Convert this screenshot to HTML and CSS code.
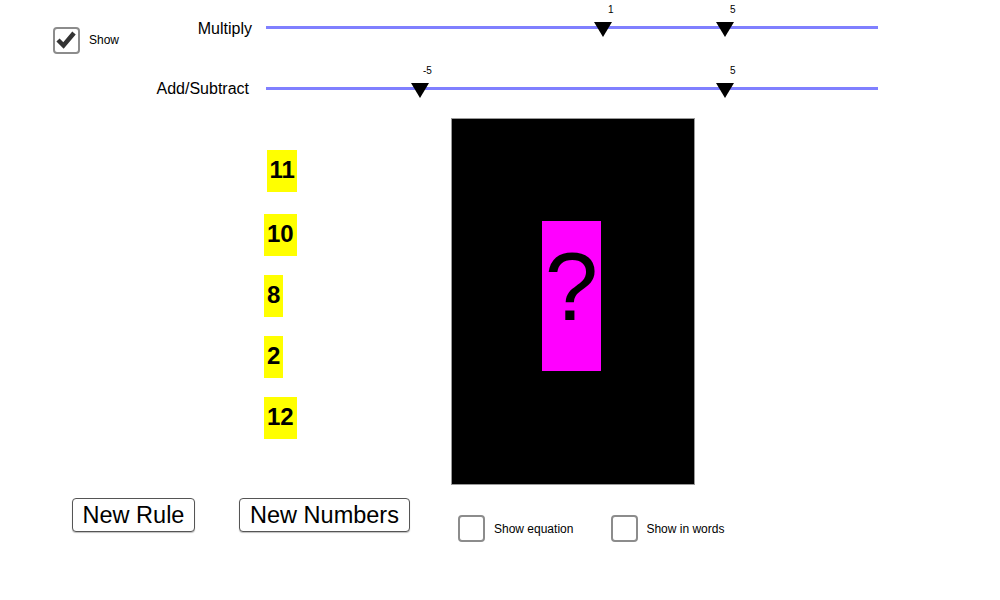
FILE: index.html
```html
<!DOCTYPE html>
<html>
<head>
<meta charset="utf-8">
<link rel="stylesheet" href="styles.css">
</head>
<body>
<div class="applet">
  <div class="check check-show">
    <span class="box">
      <svg class="tick" width="27" height="27" viewBox="0 0 27 27"><path d="M5 13 L10.5 18.5 L21 6" fill="none" stroke="#333" stroke-width="4.5" stroke-linejoin="miter"/></svg>
    </span>
    <span class="check-label">Show</span>
  </div>

  <div class="slider slider-mult">
    <span class="slider-name">Multiply</span>
    <div class="track">
      <div class="thumb" style="left:337px"><span class="thumb-val">1</span></div>
      <div class="thumb" style="left:459px"><span class="thumb-val">5</span></div>
    </div>
  </div>

  <div class="slider slider-add">
    <span class="slider-name">Add/Subtract</span>
    <div class="track">
      <div class="thumb" style="left:154px"><span class="thumb-val neg">-5</span></div>
      <div class="thumb" style="left:459px"><span class="thumb-val">5</span></div>
    </div>
  </div>

  <div class="numbers">
    <span class="num first">11</span>
    <span class="num">10</span>
    <span class="num">8</span>
    <span class="num">2</span>
    <span class="num">12</span>
  </div>

  <div class="machine">
    <div class="mystery"><span class="qmark">?</span></div>
  </div>

  <div class="buttons">
    <button class="btn btn-rule">New Rule</button>
    <button class="btn btn-numbers">New Numbers</button>
  </div>

  <div class="options">
    <div class="check">
      <span class="box"></span>
      <span class="check-label">Show equation</span>
    </div>
    <div class="check check-words">
      <span class="box"></span>
      <span class="check-label">Show in words</span>
    </div>
  </div>
</div>
</body>
</html>
```
FILE: styles.css
```css
html, body {
  margin: 0;
  padding: 0;
  background: #fff;
}
body {
  font-family: "Liberation Sans", Arial, sans-serif;
  color: #000;
}
.applet {
  position: relative;
  width: 1000px;
  height: 600px;
  overflow: hidden;
  background: #fff;
}

/* checkboxes */
.check {
  display: flex;
  align-items: center;
  gap: 9px;
}
.box {
  box-sizing: border-box;
  width: 27px;
  height: 27px;
  border: 2px solid #8c8c8c;
  border-radius: 4px;
  background: #fff;
  position: relative;
  flex: none;
}
.tick {
  position: absolute;
  left: -2px;
  top: -2px;
}
.check-label {
  font-size: 12px;
  line-height: 14px;
}
.check-show {
  position: absolute;
  left: 53px;
  top: 27px;
}
.check-show .check-label { margin-top: -2px; }

/* sliders */
.slider {
  position: absolute;
  left: 0;
  display: flex;
  align-items: flex-start;
}
.slider-mult { top: 20px; }
.slider-add { top: 80px; }
.slider-name {
  width: 252px;
  text-align: right;
  font-size: 16px;
  line-height: 18px;
  flex: none;
}
.slider-add .slider-name { width: 249px; }
.slider-mult .track { margin-left: 14px; margin-top: 6px; }
.slider-add .track { margin-left: 17px; margin-top: 7px; }
.track {
  position: relative;
  width: 612px;
  height: 3px;
  background: #8080ff;
}
.thumb {
  position: absolute;
  top: -4px;
  width: 0;
  height: 0;
  margin-left: -9px;
  border-left: 9px solid transparent;
  border-right: 9px solid transparent;
  border-top: 15px solid #000;
}
.thumb-val {
  position: absolute;
  left: 5px;
  top: -33px;
  font-size: 10px;
  line-height: 12px;
  white-space: nowrap;
}
.thumb-val.neg { left: 3px; }

/* input numbers */
.numbers {
  position: absolute;
  left: 264px;
  top: 150px;
  display: flex;
  flex-direction: column;
  align-items: flex-start;
  gap: 19px;
}
.num {
  display: block;
  background: #ffff00;
  font-weight: bold;
  font-size: 24px;
  line-height: 40px;
  height: 42px;
  padding: 0 3px;
}
.num.first {
  margin-left: 3px;
  margin-bottom: 3px;
  padding: 0 2.5px;
}

/* machine */
.machine {
  position: absolute;
  left: 451px;
  top: 118px;
  box-sizing: border-box;
  width: 244px;
  height: 367px;
  background: #000;
  border: 1px solid #999;
}
.mystery {
  position: absolute;
  left: 90px;
  top: 102px;
  width: 59px;
  height: 150px;
  background: #ff00ff;
  text-align: center;
}
.qmark {
  display: block;
  margin-top: 18px;
  font-size: 96px;
  line-height: 96px;
}

/* buttons */
.buttons {
  position: absolute;
  left: 72px;
  top: 498px;
  display: flex;
  gap: 44px;
}
.btn {
  box-sizing: border-box;
  height: 34px;
  padding: 0;
  white-space: nowrap;
  text-align: center;
  font-family: "Liberation Sans", Arial, sans-serif;
  font-size: 23.5px;
  line-height: 30px;
  color: #000;
  background: #fff;
  border: 1px solid #555;
  border-radius: 4px;
  box-shadow: 0 1px 1px rgba(0,0,0,0.25);
}
.btn-rule { width: 123px; }
.btn-numbers { width: 171px; }

/* options */
.options {
  position: absolute;
  left: 458px;
  top: 515px;
  display: flex;
  gap: 38px;
}
.check-words { gap: 8px; }
```
